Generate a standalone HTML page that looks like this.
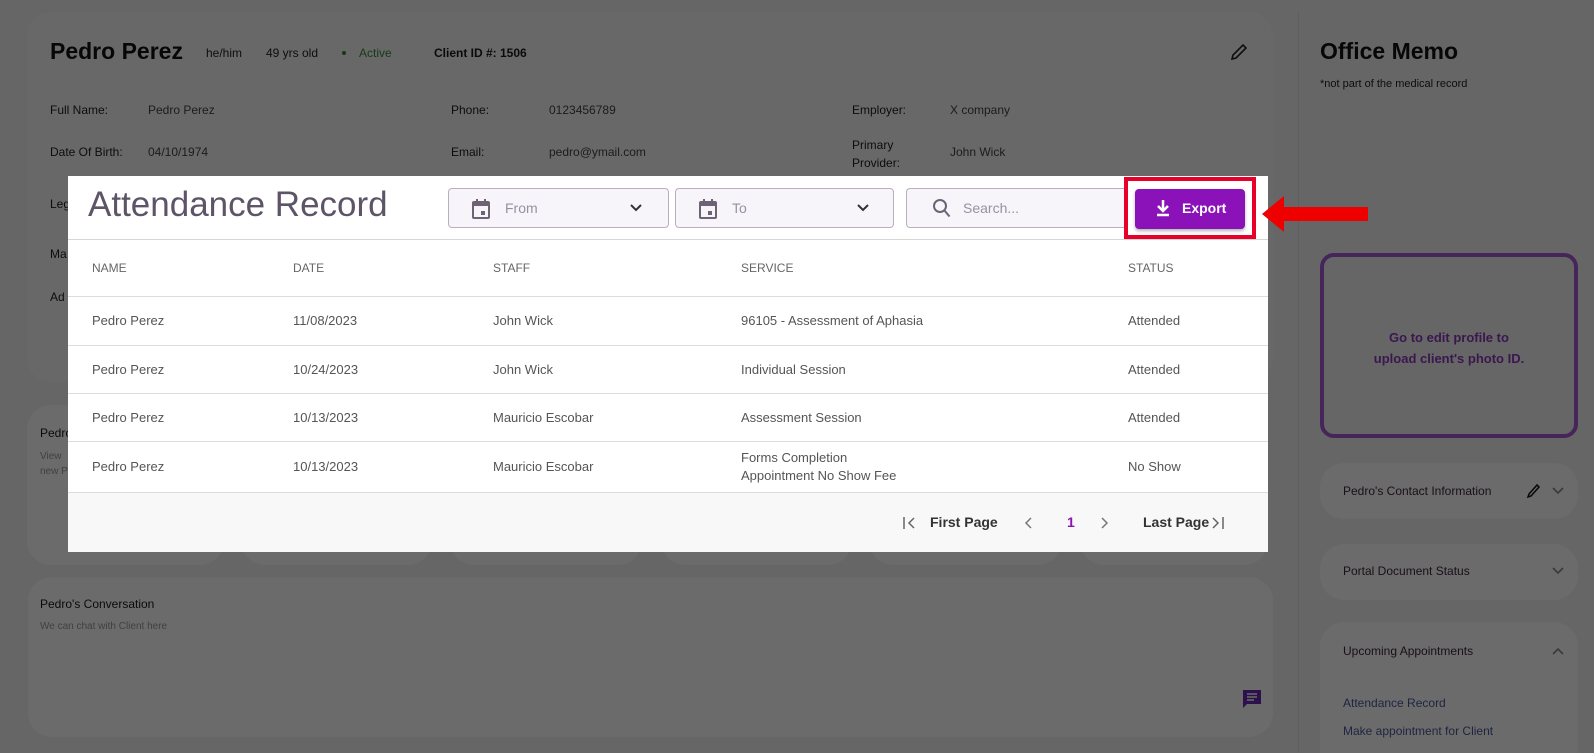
<!DOCTYPE html>
<html><head><meta charset="utf-8"><style>
*{box-sizing:border-box;margin:0;padding:0}
html,body{width:1594px;height:753px;overflow:hidden;background:#f2f2f2}
body{font-family:"Liberation Sans",sans-serif;position:relative;color:#1a1a1a}
.abs{position:absolute}
.card{position:absolute;background:#ffffff;border-radius:24px}
.lbl{position:absolute;font-size:12px;color:#1e1e1e}
.val{position:absolute;font-size:12px;color:#444}
.overlay{position:absolute;left:0;top:0;width:1594px;height:753px;background:rgba(0,0,0,0.58)}
.modal{position:absolute;left:68px;top:176px;width:1200px;height:376px;background:#fff;overflow:hidden}
.inp{position:absolute;top:12px;height:40px;border:1px solid #b9aebf;border-radius:4px;background:#f7f5f9}
.inp span{position:absolute;left:56px;top:11px;font-size:14px;color:#9a90a2}
.th{position:absolute;top:85px;font-size:12px;color:#666}
.row{position:absolute;left:0;width:1200px;border-top:1px solid #ddd}
.row div{position:absolute;font-size:13px;color:#555}
.chev{position:absolute}
</style></head><body>
<!-- left main card -->
<div class="card" style="left:27px;top:12px;width:1246px;height:370px;background:#f8f8f8"></div>
<div class="abs" style="left:50px;top:38px;font-size:23px;font-weight:bold;color:#111">Pedro Perez</div>
<div class="abs" style="left:206px;top:46px;font-size:12px;color:#222">he/him</div>
<div class="abs" style="left:266px;top:46px;font-size:12px;color:#222">49 yrs old</div>
<div class="abs" style="left:342px;top:51px;width:4px;height:4px;border-radius:50%;background:#2f8a2f"></div>
<div class="abs" style="left:359px;top:46px;font-size:12px;color:#3a8a3a">Active</div>
<div class="abs" style="left:434px;top:46px;font-size:12px;font-weight:bold;color:#1a1a1a">Client ID #: 1506</div>
<svg class="abs" style="left:1229px;top:42px" width="20" height="20" viewBox="0 0 20 20"><path d="M3 17l1-4L14 3l3 3L7 16z" fill="none" stroke="#222" stroke-width="1.6"/></svg>
<div class="lbl" style="left:50px;top:103px">Full Name:</div><div class="val" style="left:148px;top:103px">Pedro Perez</div>
<div class="lbl" style="left:50px;top:145px">Date Of Birth:</div><div class="val" style="left:148px;top:145px">04/10/1974</div>
<div class="lbl" style="left:451px;top:103px">Phone:</div><div class="val" style="left:549px;top:103px">0123456789</div>
<div class="lbl" style="left:451px;top:145px">Email:</div><div class="val" style="left:549px;top:145px">pedro@ymail.com</div>
<div class="lbl" style="left:852px;top:103px">Employer:</div><div class="val" style="left:950px;top:103px">X company</div>
<div class="lbl" style="left:852px;top:136px;line-height:18px">Primary<br>Provider:</div><div class="val" style="left:950px;top:145px">John Wick</div>
<div class="lbl" style="left:50px;top:197px">Leg</div>
<div class="lbl" style="left:50px;top:247px">Ma</div>
<div class="lbl" style="left:50px;top:290px">Ad</div>
<!-- small cards -->
<div class="card" style="left:27px;top:405px;width:197px;height:160px"></div>
<div class="card" style="left:241px;top:405px;width:191px;height:160px"></div>
<div class="card" style="left:450px;top:405px;width:192px;height:160px"></div>
<div class="card" style="left:661px;top:405px;width:191px;height:160px"></div>
<div class="card" style="left:869px;top:405px;width:193px;height:160px"></div>
<div class="card" style="left:1080px;top:405px;width:188px;height:160px"></div>
<div class="abs" style="left:40px;top:426px;font-size:12px;color:#1a1a1a">Pedro</div>
<div class="abs" style="left:40px;top:449px;font-size:10px;color:#999;line-height:15px">View<br>new P</div>
<div class="card" style="left:28px;top:577px;width:1245px;height:160px"></div>
<div class="abs" style="left:40px;top:597px;font-size:12px;color:#1a1a1a">Pedro's Conversation</div>
<div class="abs" style="left:40px;top:621px;font-size:10px;color:#999">We can chat with Client here</div>
<svg class="abs" style="left:1241px;top:688px" width="22" height="22" viewBox="0 0 22 22"><path d="M2 2h18v14H6l-4 4z" fill="#6a2ab0"/><path d="M6 6h10M6 9h10M6 12h7" stroke="#fff" stroke-width="1.5"/></svg>
<!-- divider and right panel -->
<div class="abs" style="left:1298px;top:12px;width:1px;height:741px;background:#e0e0e0"></div>
<div class="abs" style="left:1320px;top:38px;font-size:23px;font-weight:bold;color:#111">Office Memo</div>
<div class="abs" style="left:1320px;top:78px;font-size:11px;color:#222">*not part of the medical record</div>
<div class="card" style="left:1320px;top:94px;width:258px;height:114px;background:#f4f4f4"></div>
<div class="abs" style="left:1320px;top:253px;width:258px;height:185px;border:4px solid #a85ad6;border-radius:14px;text-align:center;padding-top:70px;font-size:13px;font-weight:bold;color:#8a3abc;line-height:21px">Go to edit profile to<br>upload client's photo ID.</div>
<div class="card" style="left:1320px;top:463px;width:258px;height:56px"></div>
<div class="abs" style="left:1343px;top:484px;font-size:12px;color:#3a2a3a">Pedro's Contact Information</div>
<svg class="abs" style="left:1526px;top:483px" width="16" height="16" viewBox="0 0 16 16"><path d="M2 14l1-3 8-9 2 2-8 9z" fill="none" stroke="#111" stroke-width="1.5"/></svg>
<svg class="chev" style="left:1551px;top:486px" width="14" height="10"><path d="M2 2l5 5 5-5" fill="none" stroke="#888" stroke-width="1.6"/></svg>
<div class="card" style="left:1320px;top:544px;width:258px;height:56px"></div>
<div class="abs" style="left:1343px;top:564px;font-size:12px;color:#3a2a3a">Portal Document Status</div>
<svg class="chev" style="left:1551px;top:566px" width="14" height="10"><path d="M2 2l5 5 5-5" fill="none" stroke="#888" stroke-width="1.6"/></svg>
<div class="card" style="left:1320px;top:622px;width:258px;height:160px"></div>
<div class="abs" style="left:1343px;top:644px;font-size:12px;color:#3a2a3a">Upcoming Appointments</div>
<svg class="chev" style="left:1551px;top:646px" width="14" height="10"><path d="M2 8l5-5 5 5" fill="none" stroke="#888" stroke-width="1.6"/></svg>
<div class="abs" style="left:1343px;top:696px;font-size:12px;color:#4a5a9a">Attendance Record</div>
<div class="abs" style="left:1343px;top:724px;font-size:12px;color:#4a5a9a">Make appointment for Client</div>
<div class="overlay"></div>
<!-- modal -->
<div class="modal">
  <div class="abs" style="left:20px;top:9px;font-size:35px;color:#5e5468">Attendance Record</div>
  <div class="inp" style="left:380px;width:221px"><svg class="abs" style="left:22px;top:9px" width="20" height="22" viewBox="0 0 20 22"><rect x="2" y="4" width="16" height="16" rx="1" fill="none" stroke="#6e6276" stroke-width="2"/><rect x="2" y="4" width="16" height="4" fill="#6e6276"/><path d="M6 1v4M14 1v4" stroke="#6e6276" stroke-width="2"/><rect x="10" y="13" width="4" height="4" fill="#6e6276"/></svg><span>From</span><svg class="abs" style="left:180px;top:14px" width="14" height="10"><path d="M2 2l5 5 5-5" fill="none" stroke="#333" stroke-width="2"/></svg></div>
  <div class="inp" style="left:607px;width:219px"><svg class="abs" style="left:22px;top:9px" width="20" height="22" viewBox="0 0 20 22"><rect x="2" y="4" width="16" height="16" rx="1" fill="none" stroke="#6e6276" stroke-width="2"/><rect x="2" y="4" width="16" height="4" fill="#6e6276"/><path d="M6 1v4M14 1v4" stroke="#6e6276" stroke-width="2"/><rect x="10" y="13" width="4" height="4" fill="#6e6276"/></svg><span>To</span><svg class="abs" style="left:180px;top:14px" width="14" height="10"><path d="M2 2l5 5 5-5" fill="none" stroke="#333" stroke-width="2"/></svg></div>
  <div class="inp" style="left:838px;width:230px;border-right:none;border-radius:4px 0 0 4px"><svg class="abs" style="left:25px;top:9px" width="20" height="22" viewBox="0 0 20 22"><circle cx="8" cy="8" r="6" fill="none" stroke="#6e6276" stroke-width="2"/><path d="M12.5 12.5l5 6" stroke="#6e6276" stroke-width="2"/></svg><span>Search...</span></div>
  <div class="abs" style="left:1056px;top:1px;width:132px;height:62px;border:4px solid #e8002a;background:#fff"></div>
  <div class="abs" style="left:1067px;top:13px;width:110px;height:40px;background:#8b12b9;border-radius:4px;box-shadow:0 2px 3px rgba(0,0,0,.3)"><svg class="abs" style="left:20px;top:10px" width="16" height="18" viewBox="0 0 16 18"><path d="M8 1v10M3 7l5 5 5-5" fill="none" stroke="#fff" stroke-width="2.5"/><path d="M2 16h12" stroke="#fff" stroke-width="2.5"/></svg><div class="abs" style="left:47px;top:11px;font-size:14px;font-weight:bold;color:#fff">Export</div></div>
  <div class="abs" style="left:0;top:63px;width:1200px;border-top:1px solid #d6d6d6"></div>
  <div class="th" style="left:24px">NAME</div><div class="th" style="left:225px">DATE</div><div class="th" style="left:425px">STAFF</div><div class="th" style="left:673px">SERVICE</div><div class="th" style="left:1060px">STATUS</div>
  <div class="row" style="top:120px;height:49px"><div style="left:24px;top:16px">Pedro Perez</div><div style="left:225px;top:16px">11/08/2023</div><div style="left:425px;top:16px">John Wick</div><div style="left:673px;top:16px">96105 - Assessment of Aphasia</div><div style="left:1060px;top:16px">Attended</div></div>
  <div class="row" style="top:169px;height:48px"><div style="left:24px;top:16px">Pedro Perez</div><div style="left:225px;top:16px">10/24/2023</div><div style="left:425px;top:16px">John Wick</div><div style="left:673px;top:16px">Individual Session</div><div style="left:1060px;top:16px">Attended</div></div>
  <div class="row" style="top:217px;height:48px"><div style="left:24px;top:16px">Pedro Perez</div><div style="left:225px;top:16px">10/13/2023</div><div style="left:425px;top:16px">Mauricio Escobar</div><div style="left:673px;top:16px">Assessment Session</div><div style="left:1060px;top:16px">Attended</div></div>
  <div class="row" style="top:265px;height:51px"><div style="left:24px;top:17px">Pedro Perez</div><div style="left:225px;top:17px">10/13/2023</div><div style="left:425px;top:17px">Mauricio Escobar</div><div style="left:673px;top:7px;line-height:18px">Forms Completion<br>Appointment No Show Fee</div><div style="left:1060px;top:17px">No Show</div></div>
  <div class="abs" style="left:0;top:316px;width:1200px;height:60px;background:#f8f8f8;border-top:1px solid #ddd"></div>
  <svg class="abs" style="left:834px;top:339px" width="16" height="16"><path d="M2 2v12M12 3l-5 5 5 5" fill="none" stroke="#666" stroke-width="1.5"/></svg>
  <div class="abs" style="left:862px;top:338px;font-size:14px;font-weight:bold;color:#333">First Page</div>
  <svg class="abs" style="left:955px;top:339px" width="12" height="16"><path d="M8 3l-5 5 5 5" fill="none" stroke="#777" stroke-width="1.5"/></svg>
  <div class="abs" style="left:999px;top:338px;font-size:14px;font-weight:bold;color:#8b12b9">1</div>
  <svg class="abs" style="left:1031px;top:339px" width="12" height="16"><path d="M3 3l5 5-5 5" fill="none" stroke="#777" stroke-width="1.5"/></svg>
  <div class="abs" style="left:1075px;top:338px;font-size:14px;font-weight:bold;color:#333">Last Page</div>
  <svg class="abs" style="left:1142px;top:339px" width="16" height="16"><path d="M3 3l5 5-5 5M13 2v12" fill="none" stroke="#666" stroke-width="1.5"/></svg>
</div>
<!-- red arrow -->
<svg class="abs" style="left:1262px;top:196px" width="108" height="36" viewBox="0 0 108 36"><path d="M0 18L22 0v11h84v14H22v11z" fill="#ee0000"/></svg>
</body></html>
